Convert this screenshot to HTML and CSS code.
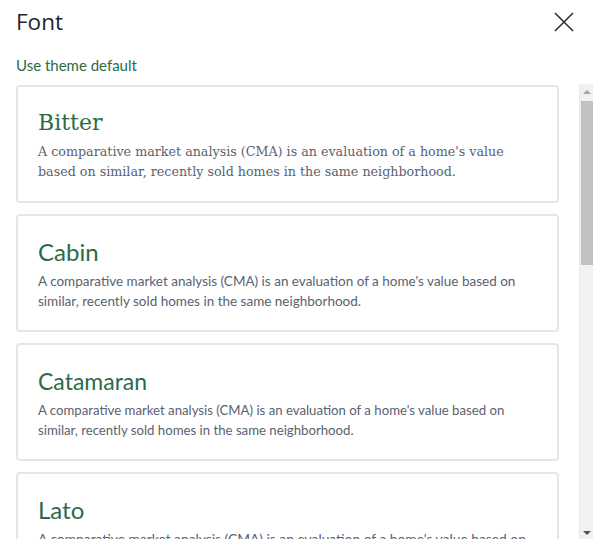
FILE: index.html
```html
<!DOCTYPE html>
<html>
<head>
<meta charset="utf-8">
<link rel="stylesheet" href="styles.css">
</head>
<body>
<div class="panel">
  <header class="header">
    <h1 class="title">Font</h1>
    <button class="close" aria-label="Close">
      <svg width="20" height="20" viewBox="0 0 20 20"><path d="M1 1L19 19M19 1L1 19" stroke="#2b2f36" stroke-width="1.6" fill="none"/></svg>
    </button>
  </header>
  <a class="reset" href="#">Use theme default</a>
  <div class="scroller">
    <div class="list">
      <div class="card f-bitter">
        <div class="name">Bitter</div>
        <p class="desc">A comparative market analysis (CMA) is an evaluation of a home's value based on similar, recently sold homes in the same neighborhood.</p>
      </div>
      <div class="card f-cabin">
        <div class="name">Cabin</div>
        <p class="desc">A comparative market analysis (CMA) is an evaluation of a home's value based on similar, recently sold homes in the same neighborhood.</p>
      </div>
      <div class="card f-catamaran">
        <div class="name">Catamaran</div>
        <p class="desc">A comparative market analysis (CMA) is an evaluation of a home's value based on similar, recently sold homes in the same neighborhood.</p>
      </div>
      <div class="card f-lato">
        <div class="name">Lato</div>
        <p class="desc">A comparative market analysis (CMA) is an evaluation of a home's value based on similar, recently sold homes in the same neighborhood.</p>
      </div>
      <div class="card f-merri">
        <div class="name">Merriweather</div>
        <p class="desc">A comparative market analysis (CMA) is an evaluation of a home's value based on similar, recently sold homes in the same neighborhood.</p>
      </div>
      <div class="card f-mont">
        <div class="name">Montserrat</div>
        <p class="desc">A comparative market analysis (CMA) is an evaluation of a home's value based on similar, recently sold homes in the same neighborhood.</p>
      </div>
      <div class="card f-open">
        <div class="name">Open Sans</div>
        <p class="desc">A comparative market analysis (CMA) is an evaluation of a home's value based on similar, recently sold homes in the same neighborhood.</p>
      </div>
      <div class="card f-roboto">
        <div class="name">Roboto</div>
        <p class="desc">A comparative market analysis (CMA) is an evaluation of a home's value based on similar, recently sold homes in the same neighborhood.</p>
      </div>
      <div class="card f-source">
        <div class="name">Source Sans Pro</div>
        <p class="desc">A comparative market analysis (CMA) is an evaluation of a home's value based on similar, recently sold homes in the same neighborhood.</p>
      </div>
    </div>
    <div class="scrollbar">
      <div class="sb-btn"><span class="tri up"></span></div>
      <div class="sb-track"><div class="sb-thumb"></div></div>
      <div class="sb-btn"><span class="tri down"></span></div>
    </div>
  </div>
</div>
</body>
</html>
```

FILE: styles.css
```css
html, body {
  margin: 0;
  padding: 0;
  background: #ffffff;
  height: 100%;
  overflow: hidden;
}
.panel {
  display: flex;
  flex-direction: column;
  height: 539px;
  font-family: "Open Sans", "Noto Sans", sans-serif;
}
.header {
  display: flex;
  justify-content: space-between;
  align-items: center;
  padding: 9px 19px 0 16px;
  height: 26px;
}
.title {
  margin: 0;
  font-weight: 400;
  font-size: 22.5px;
  line-height: 26px;
  color: #1f2530;
}
.close {
  border: 0;
  background: none;
  padding: 0;
  width: 20px;
  height: 20px;
  display: flex;
}
.reset {
  display: block;
  margin: 20px 0 0 16px;
  font-family: "Lato", sans-serif;
  font-size: 15px;
  line-height: 20px;
  color: #2b6b47;
  text-decoration: none;
  align-self: flex-start;
}
.scroller {
  margin-top: 9px;
  flex: 1;
  min-height: 0;
  display: flex;
}
.list {
  flex: 1;
  overflow: hidden;
  padding: 1px 20px 0 16px;
  display: flex;
  flex-direction: column;
  gap: 11px;
}
.card {
  flex: none;
  border: 2px solid #e3e6ea;
  border-radius: 4px;
  padding: 20px 20px 19px 20px;
  height: 118px;
  box-sizing: border-box;
}
.name {
  font-size: 24px;
  line-height: 32px;
  color: #2b6b47;
}
.desc {
  margin: 3px 0 0;
  font-size: 14px;
  line-height: 20px;
  color: #5a6270;
}
.f-bitter { font-family: "DejaVu Serif", serif; }
.f-bitter .name { font-size: 22px; }
.f-bitter .desc { font-size: 12.7px; }
.f-cabin { font-family: "Lato", sans-serif; }
.f-cabin .desc { font-size: 13.5px; }
.f-catamaran { font-family: "Lato", sans-serif; }
.f-catamaran .name { font-size: 23px; }
.f-catamaran .desc { font-size: 13.2px; }
.f-lato { font-family: "Lato", sans-serif; }
.f-lato .desc { font-size: 13.8px; }
.f-merri { font-family: "Liberation Serif", serif; }
.f-mont { font-family: "DejaVu Sans", sans-serif; }
.f-open { font-family: "Open Sans", sans-serif; }
.f-roboto { font-family: "Roboto", sans-serif; }
.f-source { font-family: "Noto Sans", sans-serif; }

.scrollbar {
  width: 13px;
  flex: none;
  background: #f1f1f1;
  border-left: 1px solid #e9e9e9;
  display: flex;
  flex-direction: column;
}
.sb-btn {
  height: 16px;
  flex: none;
  display: flex;
  align-items: center;
  justify-content: center;
}
.sb-track {
  flex: 1;
  padding-top: 1px;
}
.sb-thumb {
  height: 164px;
  margin-left: 1px;
  background: #c1c1c1;
}
.tri {
  width: 0;
  height: 0;
  border-left: 4px solid transparent;
  border-right: 4px solid transparent;
}
.tri.up {
  border-bottom: 4px solid #a3a3a3;
}
.tri.down {
  border-top: 4px solid #505050;
  margin-top: 4px;
}
```
